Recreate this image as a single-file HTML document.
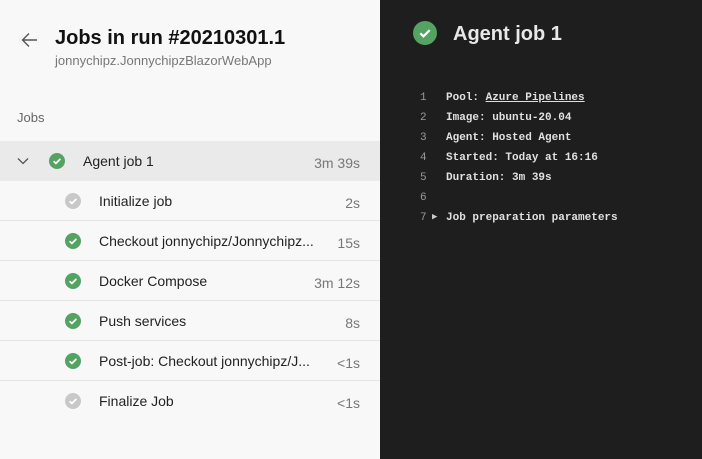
<!DOCTYPE html>
<html><head><meta charset="utf-8"><style>
*{margin:0;padding:0;box-sizing:border-box}
body{width:702px;height:459px;overflow:hidden;font-family:"Liberation Sans",sans-serif;position:relative;background:#f8f8f8}
.left{position:absolute;left:0;top:0;width:380px;height:459px;background:#f8f8f8}
.right{position:absolute;left:380px;top:0;width:322px;height:459px;background:#1e1e1e;color:#e8e8e8}
.abs{position:absolute;white-space:nowrap}
.row{position:absolute;left:0;width:380px;height:40px;border-bottom:1px solid #e4e4e4}
.row .name{position:absolute;left:99px;top:12px;font-size:14px;color:#222}
.row .dur{position:absolute;right:20px;top:14px;font-size:14px;color:#777}
.ic{position:absolute}
.mono{font-family:"Liberation Mono",monospace;font-size:11px;font-weight:bold}
.ln{position:absolute;left:40px;color:#9a9a9a;font-weight:normal}
.tx{position:absolute;left:66px;color:#e0e0e0}
</style></head><body>
<div class="left">
 <svg class="abs" style="left:20px;top:30px" width="20" height="20" viewBox="0 0 20 20"><path d="M17 10H3M9 3.5L2.5 10 9 16.5" fill="none" stroke="#555" stroke-width="1.4"/></svg>
 <div class="abs" style="left:55px;top:27px;font-size:20px;font-weight:bold;color:#111">Jobs in run #20210301.1</div>
 <div class="abs" style="left:55px;top:53px;font-size:13px;color:#777">jonnychipz.JonnychipzBlazorWebApp</div>
 <div class="abs" style="left:17px;top:110px;font-size:13px;color:#666">Jobs</div>
 <div class="row" style="top:141px;background:#eaeaea;border-bottom:none">
  <svg class="ic" style="left:16px;top:14px" width="14" height="12" viewBox="0 0 14 12"><path d="M2 3.5l5 5 5-5" fill="none" stroke="#555" stroke-width="1.3"/></svg>
  <svg class="ic" style="left:49px;top:12px" width="16" height="16" viewBox="0 0 16 16"><circle cx="8" cy="8" r="8" fill="#55a362"/><path d="M4.6 8.2l2.3 2.2 4.5-4.5" fill="none" stroke="#fff" stroke-width="1.7"/></svg>
  <div class="name" style="left:83px">Agent job 1</div><div class="dur">3m 39s</div>
 </div>
 <div class="row" style="top:181px"><svg class="ic" style="left:65px;top:12px" width="16" height="16" viewBox="0 0 16 16"><circle cx="8" cy="8" r="8" fill="#c8c8c8"/><path d="M4.6 8.2l2.3 2.2 4.5-4.5" fill="none" stroke="#fff" stroke-width="1.7"/></svg><div class="name">Initialize job</div><div class="dur">2s</div></div>
 <div class="row" style="top:221px"><svg class="ic" style="left:65px;top:12px" width="16" height="16" viewBox="0 0 16 16"><circle cx="8" cy="8" r="8" fill="#55a362"/><path d="M4.6 8.2l2.3 2.2 4.5-4.5" fill="none" stroke="#fff" stroke-width="1.7"/></svg><div class="name">Checkout jonnychipz/Jonnychipz...</div><div class="dur">15s</div></div>
 <div class="row" style="top:261px"><svg class="ic" style="left:65px;top:12px" width="16" height="16" viewBox="0 0 16 16"><circle cx="8" cy="8" r="8" fill="#55a362"/><path d="M4.6 8.2l2.3 2.2 4.5-4.5" fill="none" stroke="#fff" stroke-width="1.7"/></svg><div class="name">Docker Compose</div><div class="dur">3m 12s</div></div>
 <div class="row" style="top:301px"><svg class="ic" style="left:65px;top:12px" width="16" height="16" viewBox="0 0 16 16"><circle cx="8" cy="8" r="8" fill="#55a362"/><path d="M4.6 8.2l2.3 2.2 4.5-4.5" fill="none" stroke="#fff" stroke-width="1.7"/></svg><div class="name">Push services</div><div class="dur">8s</div></div>
 <div class="row" style="top:341px"><svg class="ic" style="left:65px;top:12px" width="16" height="16" viewBox="0 0 16 16"><circle cx="8" cy="8" r="8" fill="#55a362"/><path d="M4.6 8.2l2.3 2.2 4.5-4.5" fill="none" stroke="#fff" stroke-width="1.7"/></svg><div class="name">Post-job: Checkout jonnychipz/J...</div><div class="dur">&lt;1s</div></div>
 <div class="row" style="top:381px;border-bottom:none"><svg class="ic" style="left:65px;top:12px" width="16" height="16" viewBox="0 0 16 16"><circle cx="8" cy="8" r="8" fill="#c8c8c8"/><path d="M4.6 8.2l2.3 2.2 4.5-4.5" fill="none" stroke="#fff" stroke-width="1.7"/></svg><div class="name">Finalize Job</div><div class="dur">&lt;1s</div></div>
</div>
<div class="right">
 <svg class="abs" style="left:33px;top:21px" width="24" height="24" viewBox="0 0 24 24"><circle cx="12" cy="12" r="12" fill="#55a362"/><path d="M7.3 12.3l3.2 3 6.2-6.2" fill="none" stroke="#fff" stroke-width="2.2"/></svg>
 <div class="abs" style="left:73px;top:23px;font-size:20px;font-weight:bold;color:#e8e8e8">Agent job 1</div>
 <div class="mono">
  <div class="abs ln" style="top:92px">1</div><div class="abs tx" style="top:92px">Pool: <u>Azure Pipelines</u></div>
  <div class="abs ln" style="top:112px">2</div><div class="abs tx" style="top:112px">Image: ubuntu-20.04</div>
  <div class="abs ln" style="top:132px">3</div><div class="abs tx" style="top:132px">Agent: Hosted Agent</div>
  <div class="abs ln" style="top:152px">4</div><div class="abs tx" style="top:152px">Started: Today at 16:16</div>
  <div class="abs ln" style="top:172px">5</div><div class="abs tx" style="top:172px">Duration: 3m 39s</div>
  <div class="abs ln" style="top:192px">6</div>
  <div class="abs ln" style="top:212px">7</div><div class="abs" style="left:52px;top:212px;color:#ccc;font-size:9px">&#9654;</div><div class="abs tx" style="top:212px">Job preparation parameters</div>
 </div>
</div>
</body></html>
